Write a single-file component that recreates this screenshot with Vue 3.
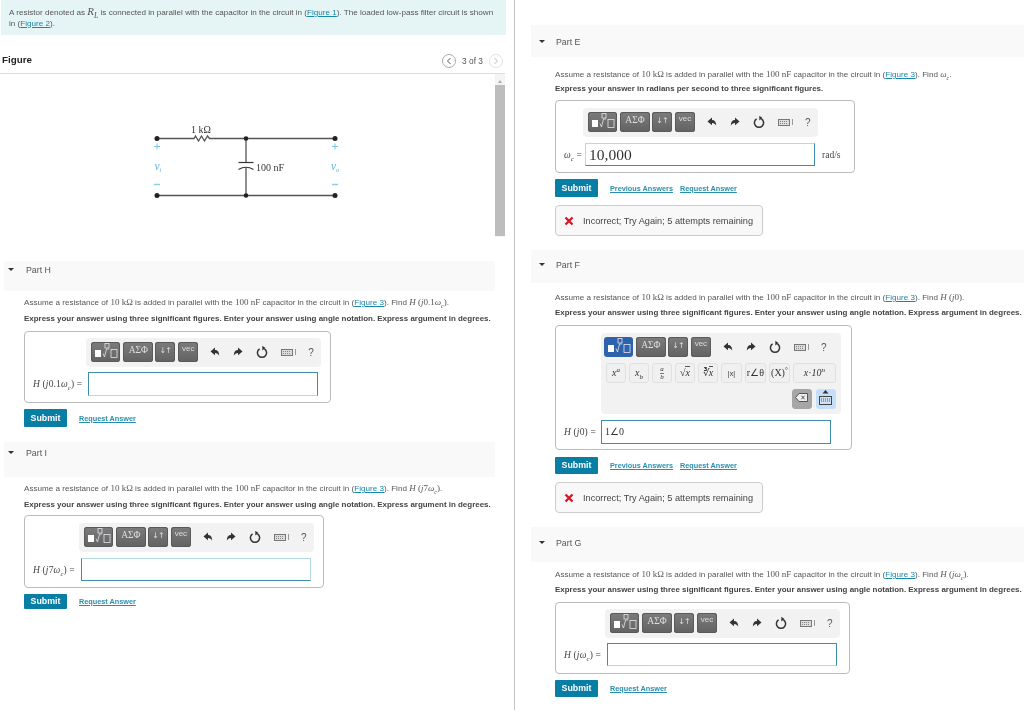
<script setup>
const findText = 'Assume a resistance of <span class="m">10 kΩ</span> is added in parallel with the <span class="m">100 nF</span> capacitor in the circuit in'
const angleHint = 'Express your answer using three significant figures. Enter your answer using angle notation. Express argument in degrees.'

const columns = [
  {
    id: 'left',
    parts: [
      { id: 'h', name: 'Part H', find: '<i>H</i> (<i>j</i>0.1<i>ω<sub>c</sub></i>)', label: '<i>H</i> (<i>j</i>0.1<i>ω<sub>c</sub></i>) =', hint: angleHint },
      { id: 'i', name: 'Part I', find: '<i>H</i> (<i>j</i>7<i>ω<sub>c</sub></i>)', label: '<i>H</i> (<i>j</i>7<i>ω<sub>c</sub></i>) =', hint: angleHint },
    ],
  },
  {
    id: 'right',
    parts: [
      { id: 'e', name: 'Part E', find: '<i>ω<sub>c</sub></i>', label: '<i>ω<sub>c</sub></i> =', hint: 'Express your answer in radians per second to three significant figures.', value: '10,000', unit: 'rad/s', tried: true },
      { id: 'f', name: 'Part F', find: '<i>H</i> (<i>j</i>0)', label: '<i>H</i> (<i>j</i>0) =', hint: angleHint, value: '1∠0', keypad: true, tried: true },
      { id: 'g', name: 'Part G', find: '<i>H</i> (<i>jω<sub>c</sub></i>)', label: '<i>H</i> (<i>jω<sub>c</sub></i>) =', hint: angleHint },
    ],
  },
]

const keys = [
  { id: 'pow', html: '<i>x<sup>a</sup></i>' },
  { id: 'sub', html: '<i>x<sub>b</sub></i>' },
  { id: 'frac', html: '<span class="frac"><i>a</i><i>b</i></span>' },
  { id: 'sqrt', html: '√<i class="over">x</i>' },
  { id: 'cbrt', html: '∛<i class="over">x</i>' },
  { id: 'abs', html: '<small>|x|</small>', size: 'mid' },
  { id: 'polar', html: 'r∠θ', size: 'mid' },
  { id: 'deg', html: '(X)<sup>°</sup>', size: 'mid' },
  { id: 'sci', html: '<i>x</i>·<i>10<sup>n</sup></i>', size: 'wide' },
]
</script>

<template>
  <div class="page">
    <section v-for="col in columns" :key="col.id" class="col" :class="`col-${col.id}`">
      <template v-if="col.id === 'left'">
        <div class="banner">
          A resistor denoted as <i class="m rl">R<sub>L</sub></i> is connected in parallel with the capacitor in the circuit in (<a>Figure 1</a>). The loaded low-pass filter circuit is shown in (<a>Figure 2</a>).
        </div>

        <header class="fig-head">
          <h2>Figure</h2>
          <div class="pager">
            <span class="round">
              <svg width="8" height="8" viewBox="0 0 8 8"><path d="M5.500 1 2.500 4l3 3" fill="none" stroke="#555" stroke-width="1" /></svg>
            </span>
            <span>3 of 3</span>
            <span class="round off">
              <svg width="8" height="8" viewBox="0 0 8 8"><path d="M2.500 1l3 3-3 3" fill="none" stroke="#bbb" stroke-width="1" /></svg>
            </span>
          </div>
        </header>

        <div class="fig-body">
          <svg class="circuit" width="495" height="163" viewBox="0 74 495 163">
            <path d="M157 138.500H194l1.500-2.500 3 5 3-5 3 5 3-5 2 2.500H335M157 195.500H335M246 138.500V162M246 168V195" fill="none" stroke="#555" stroke-width="1.300" />
            <path d="M238.500 162.500H253.500" stroke="#333" stroke-width="1.200" />
            <path d="M238.500 169.500q7.500-4.500 15 0" fill="none" stroke="#333" stroke-width="1.200" />
            <g fill="#222">
              <circle cx="157" cy="138.500" r="2.500" /><circle cx="246" cy="138.500" r="2.300" /><circle cx="335" cy="138.500" r="2.500" />
              <circle cx="157" cy="195.500" r="2.500" /><circle cx="246" cy="195.500" r="2.300" /><circle cx="335" cy="195.500" r="2.500" />
            </g>
            <path d="M154 146.500h6M157 143.500v6M332 146.500h6M335 143.500v6" stroke="#7cc6ea" stroke-width="1" />
            <path d="M154 184.500h6M332 184.500h6" stroke="#8ccdee" stroke-width="1.500" />
            <g class="ckt-text">
              <text x="191" y="133">1 kΩ</text>
              <text x="256" y="171">100 nF</text>
              <text class="ckt-v" x="154.500" y="170">v<tspan dy="1.500" font-size="6.500">i</tspan></text>
              <text class="ckt-v" x="331" y="170">v<tspan dy="1.500" font-size="6.500">o</tspan></text>
            </g>
          </svg>
          <div class="scroll">
            <span class="scroll-up"></span>
            <span class="scroll-thumb"></span>
          </div>
        </div>
      </template>

      <article v-for="part in col.parts" :key="part.id" class="part" :class="`part-${part.id}`">
        <div class="bar">
          <span class="caret"></span>
          <span>{{ part.name }}</span>
        </div>

        <div class="part-body">
          <p class="line"><span v-html="findText"></span> (<a>Figure 3</a>). Find <span class="m" v-html="part.find"></span>.</p>
          <p class="line hint">{{ part.hint }}</p>

          <div class="answer">
            <div class="tools">
              <div class="tool-row">
                <button type="button" class="tbtn tpl" :class="{ on: part.keypad }">
                  <svg width="29" height="20" viewBox="0 0 29 20">
                    <rect x="4" y="8" width="6" height="7" fill="#fff" />
                    <path d="M12 11.500l1.500 3.500L15.500 7H18" fill="none" stroke="#e4e4ea" stroke-width=".8" />
                    <rect x="14" y="1.500" width="4" height="4.500" fill="none" stroke="#e4e4ea" stroke-width=".8" />
                    <rect x="20" y="7.500" width="6" height="8" fill="none" stroke="#e4e4ea" stroke-width=".8" />
                  </svg>
                </button>
                <button type="button" class="tbtn greek">ΑΣΦ</button>
                <button type="button" class="tbtn arrows">↓↑</button>
                <button type="button" class="tbtn vec">vec</button>
                <span class="ico undo">
                  <svg width="16" height="16" viewBox="0 0 16 16"><path d="M3.500 7.500 8 3.500v2.400c2.800 0 4.200 2 4.200 5.800-.9-1.900-2.200-2.800-4.200-2.800v2.400z" fill="#333" /></svg>
                </span>
                <span class="ico redo">
                  <svg width="16" height="16" viewBox="0 0 16 16"><path d="M12.500 7.500 8 3.500v2.400c-2.800 0-4.200 2-4.200 5.800.9-1.900 2.200-2.800 4.200-2.800v2.400z" fill="#333" /></svg>
                </span>
                <span class="ico reset">
                  <svg width="16" height="16" viewBox="0 0 16 16"><path d="M5.600 4.800a4.600 4.600 0 1 0 4.800 0" fill="none" stroke="#333" stroke-width="1.500" /><path d="M8.300 1.800v4.600l3.200-2.300z" fill="#333" /></svg>
                </span>
                <span class="kb">
                  <svg width="12" height="7" viewBox="0 0 12 7"><rect x=".5" y=".5" width="11" height="6" fill="#ddd" stroke="#777" /><path d="M2 2.500h8M2 4.500h8" stroke="#888" stroke-dasharray="1 1" /></svg>
                </span>
                <span class="sep"></span>
                <span class="help">?</span>
              </div>

              <template v-if="part.keypad">
                <div class="key-row">
                  <button v-for="k in keys" :key="k.id" type="button" class="key" :class="k.size" v-html="k.html"></button>
                </div>
                <div class="key-row end">
                  <button type="button" class="key back">
                    <svg width="13" height="9" viewBox="0 0 13 9"><path d="M4 .5h8.500v8H4L.5 4.500z" fill="#eee" stroke="#555" /><path d="M6.500 2.800l3 3.400m0-3.400-3 3.400" stroke="#555" /></svg>
                  </button>
                  <button type="button" class="key kbd">
                    <svg width="13" height="15" viewBox="0 0 13 15"><path d="M6.500 0 9.500 3.500h-6z" fill="#333" /><rect x=".5" y="6.500" width="12" height="8" fill="#cfe2f5" stroke="#444" /><path d="M2 9h9M2 11h9" stroke="#555" stroke-dasharray="1 1" /></svg>
                  </button>
                </div>
              </template>
            </div>

            <span class="eq" v-html="part.label"></span>
            <div class="input">{{ part.value }}</div>
            <span v-if="part.unit" class="unit">{{ part.unit }}</span>
          </div>

          <div class="actions">
            <button type="button" class="submit">Submit</button>
            <a v-if="part.tried" class="act">Previous Answers</a>
            <a class="act">Request Answer</a>
          </div>

          <div v-if="part.tried" class="wrong">
            <svg width="10" height="10" viewBox="0 0 10 10"><path d="M1.500 1.500l7 7m0-7-7 7" stroke="#d5182b" stroke-width="2.400" /></svg>
            <span>Incorrect; Try Again; 5 attempts remaining</span>
          </div>
        </div>
      </article>
    </section>
  </div>
</template>

<style>
html,
body {
  margin: 0;
  background: #fff;
}
</style>

<style scoped>
.page {
  width: 1024px;
  height: 716px;
  overflow: hidden;
  display: flex;
  background: #fff;
  color: #555;
  font-family: "Liberation Sans", Arial, sans-serif;
  font-size: 8.1px;
  filter: blur(0.3px);
}

.col {
  box-sizing: border-box;
}

.col-left {
  width: 515px;
  height: 710px;
  padding-left: 1px;
  border-right: 1px solid #c4c4c4;
}

.col-right {
  flex: 1;
  padding-left: 16px;
  padding-top: 25px;
  min-width: 0;
}

a {
  color: #1a86a8;
  text-decoration: underline;
}

.m,
:deep(.m) {
  font-family: "Liberation Serif", serif;
  font-size: 9px;
}

:deep(sub),
:deep(sup) {
  font-size: 70%;
  line-height: 0;
}

.banner {
  box-sizing: border-box;
  width: 505px;
  height: 35px;
  padding: 6px 8px;
  background: #e5f5f6;
  line-height: 10.5px;
}

.rl {
  font-size: 11px;
}

.fig-head {
  width: 505px;
  height: 39px;
  margin-left: -1px;
  display: flex;
  align-items: center;
  justify-content: space-between;
  padding: 14px 8px 0 2px;
  box-sizing: border-box;
  border-bottom: 1px solid #ddd;
}

.fig-head h2 {
  margin: -4px 0 0;
  font-size: 9.8px;
  font-weight: 700;
  color: #222;
}

.pager {
  display: flex;
  align-items: center;
  gap: 6px;
  margin-right: -6px;
  font-size: 8.4px;
}

.round {
  width: 14px;
  height: 14px;
  box-sizing: border-box;
  border: 1px solid #aaa;
  border-radius: 50%;
  display: flex;
  align-items: center;
  justify-content: center;
}

.round.off {
  border-color: #e2e2e2;
}

.fig-body {
  display: flex;
  height: 163px;
  margin-left: -1px;
}

.circuit {
  display: block;
}

.ckt-text text {
  font-family: "Liberation Serif", serif;
  font-size: 10px;
  fill: #333;
}

.ckt-text .ckt-v {
  font-style: italic;
  font-size: 11.5px;
  fill: #62b7e6;
}

.scroll {
  width: 10px;
  display: flex;
  flex-direction: column;
  align-items: center;
  background: #f4f4f4;
}

.scroll-up {
  margin: 6px 0 2px;
  width: 0;
  height: 0;
  border: 2.5px solid transparent;
  border-top: 0;
  border-bottom: 3px solid #aaa;
}

.scroll-thumb {
  width: 10px;
  flex: 1;
  background: #bdbdbd;
  margin-bottom: 1px;
}

.part {
  --bar: 32px;
  --bar-top: 4px;
  --top: 3px;
  --between: 1px;
  --box: 4px;
  --box-top: 7px;
  --box-bottom: 6px;
  --row: 6px;
  --field: 23px;
  --act: 6px;
  --submit: 18px;
}

.col-left .part {
  margin-left: 3px;
}

.col-left .part-body {
  padding-left: 20px;
}

.col-right .part-body {
  padding-left: 24px;
}

.bar {
  box-sizing: border-box;
  height: var(--bar);
  padding: var(--bar-top) 0 0 8px;
  display: flex;
  align-items: flex-start;
  gap: 11px;
  background: #f9f9f9;
  color: #555;
  font-size: 8.8px;
  line-height: 10px;
}

.caret {
  margin-top: 3px;
  width: 0;
  height: 0;
  border: 3px solid transparent;
  border-top: 3.5px solid #333;
  border-bottom: 0;
}

.col-left .bar {
  width: 491px;
  padding-left: 4px;
  gap: 12px;
}

.part-h {
  margin-top: 24px;
  --bar: 30px;
  --box-top: 6px;
  --row: 5px;
  --field: 24px;
}

.part-i {
  margin-top: 15px;
  --bar: 35px;
  --bar-top: 6px;
  --box: 2px;
  --submit: 15px;
}

.part-e {
  --bar-top: 12px;
  --top: 9px;
  --between: -1px;
  --box: 3px;
}

.part-f {
  margin-top: 14px;
  --bar: 33px;
  --bar-top: 10px;
  --top: 6px;
  --between: 0px;
  --field: 24px;
  --box-bottom: 5px;
  --act: 7px;
  --submit: 17px;
}

.part-g {
  margin-top: 14px;
  --bar: 35px;
  --bar-top: 11px;
  --top: 4px;
  --between: 0px;
  --box-top: 6px;
  --box-bottom: 7px;
  --row: 5px;
  --submit: 17px;
}

.line {
  margin: var(--between) 0 0;
  line-height: 16px;
  height: 16px;
  white-space: nowrap;
}

.line:first-child {
  margin-top: var(--top);
}

.hint {
  color: #444;
  font-size: 7.95px;
  font-weight: 700;
}

.answer {
  box-sizing: border-box;
  width: max-content;
  margin-top: var(--box);
  padding: var(--box-top) 9px var(--box-bottom) 8px;
  display: grid;
  grid-template-columns: auto auto auto;
  align-items: center;
  row-gap: var(--row);
  border: 1px solid #bbb;
  border-radius: 4px;
}

.part-e .answer {
  padding-right: 14px;
}

.part-f .answer {
  padding-right: 10px;
}

.tools {
  grid-column: 2;
  grid-row: 1;
  justify-self: start;
  box-sizing: border-box;
  width: 235px;
  margin-left: -2px;
  padding: 4px 4px 5px 5px;
  background: #f2f2f2;
  border-radius: 4px;
}

.tool-row {
  display: flex;
  align-items: center;
  height: 20px;
}

.tbtn {
  box-sizing: border-box;
  height: 20px;
  margin: 0 2px 0 0;
  padding: 0;
  border: 0;
  border-radius: 3px;
  background: linear-gradient(#7c7c7c, #626262);
  box-shadow: inset 0 0 0 1px #5a5a5a;
  color: #ddd;
  display: block;
}

.tbtn.tpl {
  width: 29px;
  margin-right: 3px;
}

.tbtn.tpl.on {
  background: #2e62ad;
  box-shadow: none;
}

.greek {
  width: 30px;
  padding-bottom: 4px;
  font: 9.5px/14px "Liberation Serif", serif;
}

.arrows {
  width: 20px;
  padding-bottom: 2px;
  letter-spacing: -1px;
  font: 8px/16px "DejaVu Sans", sans-serif;
}

.vec {
  width: 20px;
  margin-left: 1px;
  padding-bottom: 6px;
  font: 8px/12px "Liberation Sans", sans-serif;
}

.ico {
  width: 16px;
  height: 16px;
  display: block;
}

.undo,
.redo {
  margin-left: 7px;
}

.reset {
  margin-left: 8px;
}

.kb {
  margin-left: 11px;
  display: flex;
}

.sep {
  width: 1px;
  height: 6px;
  margin-left: 2px;
  background: #999;
}

.help {
  margin-left: 12px;
  font-size: 10px;
  color: #555;
}

.part-f .tools {
  width: 240px;
  margin-left: 0;
  padding: 4px 4px 5px 3px;
}

.key-row {
  display: flex;
  gap: 3px;
  margin-top: 6px;
  padding-left: 2px;
}

.key-row.end {
  justify-content: flex-end;
  gap: 4px;
  padding-right: 1px;
}

.key {
  box-sizing: border-box;
  width: 20px;
  height: 20px;
  margin: 0;
  padding: 0;
  border: 1px solid #e0e0e0;
  border-radius: 3px;
  background: #f0f0f0;
  color: #333;
  font: 10px/18px "Liberation Serif", serif;
  white-space: nowrap;
  overflow: hidden;
}

.key.mid {
  width: 21px;
}

.key.wide {
  width: 43px;
}

.key.back {
  background: #a6a6a6;
  border-color: #a6a6a6;
}

.key.kbd {
  background: #c6dff8;
  border-color: #c6dff8;
}

.key :deep(small) {
  font-size: 7px;
  font-family: "Liberation Sans", sans-serif;
}

.key :deep(.frac) {
  display: inline-flex;
  flex-direction: column;
  font-size: 7px;
  line-height: 7px;
  vertical-align: middle;
}

.key :deep(.frac i:first-child) {
  border-bottom: 1px solid #777;
}

.key :deep(.over) {
  border-top: 1px solid #555;
}

.eq {
  grid-column: 1;
  grid-row: 2;
  justify-self: end;
  margin-right: 6px;
  font: 9.5px "Liberation Serif", serif;
  letter-spacing: 0.15px;
  color: #444;
  white-space: nowrap;
}

.part-e .eq {
  margin-right: 3px;
}

.part-f .eq {
  margin-right: 5px;
}

.input {
  grid-column: 2;
  grid-row: 2;
  box-sizing: border-box;
  width: 230px;
  height: var(--field);
  padding-left: 3px;
  border: 1px solid #3f8ea9;
  background: #fff;
  color: #333;
  font: 10px/22px "Liberation Serif", serif;
}

.part-e .input {
  font-size: 15.5px;
  line-height: 21px;
  border-top-color: #b4dbe4;
  border-left-color: #b4dbe4;
}

.part-h .input,
.part-g .input {
  border-bottom-color: #b4dbe4;
}

.part-i .input {
  border-top-color: #b4dbe4;
  border-right-color: #b4dbe4;
}

.unit {
  grid-column: 3;
  grid-row: 2;
  margin-left: 4px;
  font: 9.5px "Liberation Serif", serif;
  color: #444;
}

.actions {
  display: flex;
  align-items: center;
  margin-top: var(--act);
  height: var(--submit);
}

.submit {
  width: 43px;
  height: var(--submit);
  margin: 0 12px 0 0;
  padding: 0;
  border: 0;
  border-radius: 1px;
  background: #087ea4;
  color: #fff;
  font: 700 8.8px/15px "Liberation Sans", sans-serif;
}

.act {
  margin-right: 7px;
  font-size: 7.3px;
  font-weight: 700;
  color: #2a8fad;
}

.wrong {
  box-sizing: border-box;
  width: 208px;
  height: 31px;
  margin-top: 8px;
  padding-left: 8px;
  display: flex;
  align-items: center;
  gap: 9px;
  border: 1px solid #ccc;
  border-radius: 4px;
  background: #f8f8f8;
  color: #444;
  font-size: 9.2px;
}
</style>
